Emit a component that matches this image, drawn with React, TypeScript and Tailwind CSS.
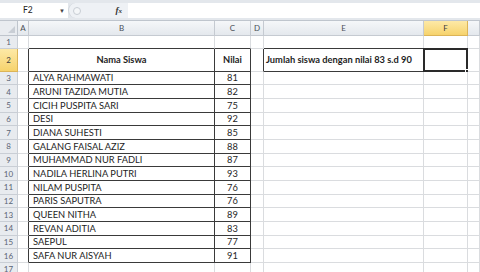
import React from 'react';
import clsx from 'clsx';

const students: [string, number][] = [
  ['ALYA RAHMAWATI', 81],
  ['ARUNI TAZIDA MUTIA', 82],
  ['CICIH PUSPITA SARI', 75],
  ['DESI', 92],
  ['DIANA SUHESTI', 85],
  ['GALANG FAISAL AZIZ', 88],
  ['MUHAMMAD NUR FADLI', 87],
  ['NADILA HERLINA PUTRI', 93],
  ['NILAM PUSPITA', 76],
  ['PARIS SAPUTRA', 76],
  ['QUEEN NITHA', 89],
  ['REVAN ADITIA', 83],
  ['SAEPUL', 77],
  ['SAFA NUR AISYAH', 91],
];

const cols = ['A', 'B', 'C', 'D', 'E', 'F', 'G'];

// which cell edges carry the black table border
const darkRight = (col: string, row: number) => {
  if (row >= 2 && row <= 16 && (col === 'A' || col === 'B' || col === 'C')) return true;
  if (row === 2 && (col === 'D' || col === 'E' || col === 'F')) return true;
  return false;
};

const darkBottom = (col: string, row: number) => {
  if (row >= 1 && row <= 16 && (col === 'B' || col === 'C')) return true;
  if ((row === 1 || row === 2) && (col === 'E' || col === 'F')) return true;
  return false;
};

const cellContent = (col: string, row: number) => {
  if (row === 2 && col === 'B') return <span className="w-full text-center font-bold">Nama Siswa</span>;
  if (row === 2 && col === 'C') return <span className="w-full text-center font-bold">Nilai</span>;
  if (row === 2 && col === 'E')
    return <span className="pl-[2px] font-bold whitespace-nowrap">Jumlah siswa dengan nilai 83 s.d 90</span>;
  if (row >= 3 && row <= 16) {
    const s = students[row - 3];
    if (col === 'B') return <span className="pl-[4px] whitespace-nowrap">{s[0]}</span>;
    if (col === 'C') return <span className="w-full text-center">{s[1]}</span>;
  }
  return null;
};

const FormulaBar = () => (
  <div className="flex h-[21px] bg-[#e3e7ec] pt-[3px] pb-[2px] border-b border-[#bfc5cd]">
    <div className="flex w-[68px] items-center bg-white text-[8.5px] text-[#222]">
      <span className="pl-[23px]">F2</span>
      <span className="ml-auto mr-[3px] text-[6px] text-[#444]">▼</span>
    </div>
    <div className="relative flex w-[60px] items-center rounded-l-[8px] bg-[#eef1f5] border-l border-[#d0d5db]">
      <div className="ml-[4px] h-[8px] w-[8px] rounded-full border border-[#c8cdd4] bg-[#f4f6f8]" />
      <span className="ml-auto mr-[6px] font-['Liberation_Serif',serif] text-[9px] font-bold italic text-[#333]">
        f<span className="text-[7px]">x</span>
      </span>
    </div>
    <div className="flex-1 bg-white" />
  </div>
);

export default function App() {
  return (
    <div className="h-[272px] w-[480px] overflow-hidden bg-white font-['Lato','Open_Sans',sans-serif] text-[#1e1e1e]">
      <FormulaBar />
      <div className="grid grid-cols-[18px_11px_186px_36px_13px_160px_44px_1fr] grid-rows-[15px_13px_22.5px_repeat(15,13.68px)]">
        {/* column headers */}
        <div className="relative border-r border-b border-[#bfc5cd] bg-[#e9ecf0]">
          <div className="absolute right-[2px] bottom-[2px] h-0 w-0 border-l-[7px] border-l-transparent border-b-[7px] border-b-[#c9ced5]" />
        </div>
        {cols.map((c) => (
          <div
            key={c}
            className={clsx(
              'flex items-center justify-center border-r border-b text-[8px] bg-gradient-to-b',
              c === 'F'
                ? 'from-[#fde9a6] to-[#f6d36c] border-[#dcb457] text-[#3c3c3c]'
                : 'from-[#f5f7f9] to-[#e4e8ed] border-[#c5cad1] text-[#4a4f57]'
            )}
          >
            {c === 'G' ? '' : c}
          </div>
        ))}
        {/* rows */}
        {Array.from({ length: 17 }, (_, i) => i + 1).map((row) => (
          <React.Fragment key={row}>
            <div
              className={clsx(
                'flex items-center justify-center border-r border-b text-[8px]',
                row === 2
                  ? 'bg-gradient-to-b from-[#fde9a6] to-[#f6d36c] border-[#dcb457] text-[#3c3c3c]'
                  : 'bg-[#e8ebef] border-[#c9ced5] text-[#5a6374]'
              )}
            >
              {row}
            </div>
            {cols.map((c) => (
              <div
                key={c}
                className={clsx(
                  'relative flex items-center border-r border-b text-[9.3px] leading-none',
                  darkRight(c, row) ? 'border-r-[#3a3a3a]' : 'border-r-[#dadcdf]',
                  darkBottom(c, row) ? 'border-b-[#3a3a3a]' : 'border-b-[#dadcdf]'
                )}
              >
                {cellContent(c, row)}
                {row === 2 && c === 'F' && (
                  <div className="absolute -top-[1px] -left-[1px] -right-[1px] -bottom-[1px] border-2 border-[#2a2a2a]">
                    <div className="absolute -right-[3px] -bottom-[3px] h-[4px] w-[4px] bg-[#2a2a2a] border border-white" />
                  </div>
                )}
              </div>
            ))}
          </React.Fragment>
        ))}
      </div>
    </div>
  );
}
